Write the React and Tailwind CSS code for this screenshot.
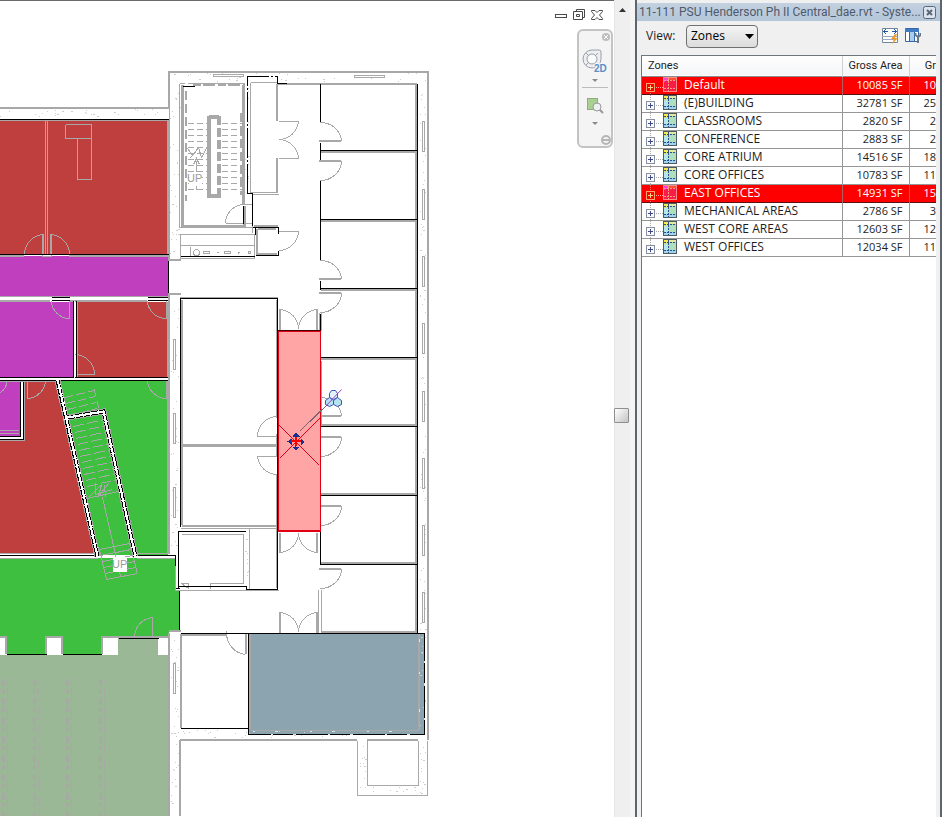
import React from 'react';

// `next` is the part of the following column that fits in the docked width
const zones = [
  { name: 'Default', gross: '10085 SF', next: '10', selected: true },
  { name: '(E)BUILDING', gross: '32781 SF', next: '25' },
  { name: 'CLASSROOMS', gross: '2820 SF', next: '2' },
  { name: 'CONFERENCE', gross: '2883 SF', next: '2' },
  { name: 'CORE ATRIUM', gross: '14516 SF', next: '18' },
  { name: 'CORE OFFICES', gross: '10783 SF', next: '11' },
  { name: 'EAST OFFICES', gross: '14931 SF', next: '15', selected: true },
  { name: 'MECHANICAL AREAS', gross: '2786 SF', next: '3' },
  { name: 'WEST CORE AREAS', gross: '12603 SF', next: '12' },
  { name: 'WEST OFFICES', gross: '12034 SF', next: '11' },
];

// window slots in the exterior walls: [x, y, vertical]
const slots = [
  [213, 74], [354, 75],
  [422, 121, 1], [422, 189, 1], [422, 256, 1], [422, 323, 1], [422, 391, 1], [422, 458, 1], [422, 525, 1], [422, 592, 1],
  [173, 339, 1], [173, 413, 1], [173, 487, 1], [173, 663, 1],
];

// office doors off the east corridor
const doorsUp = [141, 279, 416];
const doorsDown = [161, 293, 437, 506, 569];

// concrete hatch, one strip per wall: [x, y, w, h, dots]
const strips = [
  [0, 109, 168, 8, 26], [170, 74, 10, 180, 34], [182, 73, 236, 9, 30], [420, 80, 6, 650, 90],
  [171, 300, 8, 250, 40], [171, 640, 8, 170, 34], [182, 730, 175, 8, 28], [360, 742, 6, 44, 10],
  [360, 787, 64, 7, 16], [420, 742, 6, 44, 10], [244, 84, 5, 110, 14], [245, 532, 4, 54, 8],
];

function makeSpecks() {
  let seed = 7;
  const rnd = () => {
    seed = (seed * 16807) % 2147483647;
    return seed / 2147483647;
  };
  const out = [];
  strips.forEach(([x, y, w, h, n]) => {
    for (let i = 0; i < n; i++) {
      out.push([Math.floor(x + rnd() * w), Math.floor(y + rnd() * h), rnd() > 0.8 ? 2 : 1]);
    }
  });
  return out;
}

const specks = makeSpecks();
const range = (n) => Array.from({ length: n }, (_, i) => i);

// two pixel line, moved back onto the pixel grid
function Thick({ d }) {
  return <path d={d} strokeWidth="2" transform="translate(-.5 -.5)" />;
}

function Fills() {
  return (
    <g>
      <path fill="#bf3f3f" d="M0 120H168V254H0zM77 302H168V377H77zM0 440H23V380H56L97 554H0z" />
      <path fill="#bf3fbf" d="M0 256H168V296H0zM0 302H73V377H0zM0 381H20V436H0z" />
      <path fill="#3fbf3f" d="M58 381H168V555H98zM0 558H175V590H179V631H169V638H118V654H0z" />
      <path fill="#9ab896" d="M0 655H118V638H158V655H168V817H0z" />
      <path fill="#8ca3b0" d="M248 633H424V734H248z" />
      <path fill="#fff" d="M0 638H6V654H0zM46 638H62V654H46zM102 638H118V654H102zM158 638H169V654H158z" />
    </g>
  );
}

function WestWing() {
  return (
    <g fill="none">
      <g stroke="#a8a8a8">
        <Thick d="M-1 108H169V72M168 119V255M-1 256H24M69 256H168M-1 301H50M70 301H147M77 302V377M-1 381H57M168 302V554M-1 637H6V654M46 654V637H62V654M102 654V637H169M169 655V817" />
        <path d="M-1 296H169M-1 120H168M45 120V254M47 120V254M42 254V256H51V254M65 124H91V179H77V138M65 124V138H91M-1 430H18M-1 433H18M-1 440H24V381M-1 553H97M-1 558H97M136 553H168M136 558H175" />
        <path d="M43 254V234A20 20 0 0 0 24 254M50 254V234A20 20 0 0 1 69 254" />
        <Thick d="M43 234V254M51 234V254" />
        <path d="M69 300V318A18 18 0 0 1 51 300M166 300V318A19 18 0 0 1 147 300M73 354A20 20 0 0 1 94 374H75" />
        <path d="M27 377V398A19 19 0 0 0 45 379V376M166 379V398A19 19 0 0 1 147 379V376M0 392A14 14 0 0 0 6 378" />
        <path d="M134 638A20 20 0 0 1 152 617V638" />
      </g>
      <g stroke="#000">
        <path d="M-1 119H169M-1 254H169M168 256V296M51 297H69M51 300H69M147 297H168M147 300H168M73 300V377M76 300V377M-1 377H168M-1 380H168M20 381V436H-1M23 381V439H-1M-1 555H97M135 555H175M6 654H46M62 654H101M118 638H158M179 590V631" />
      </g>
      <g stroke="#fff">
        <Thick d="M-1 299H50M70 299H146M-1 438H21M-1 379H168" />
        <path d="M74 300V378M21 381V438M-1 556H97M135 556H174M51 298H69M147 298H168" />
      </g>
      {/* slanted stair walls */}
      <path stroke="#a8a8a8" strokeWidth="6" d="M57 380L97 556M67 417L103 411L135 556" />
      <path stroke="#fff" strokeWidth="4" d="M57 379L97 556M67 417L103 411L135 556" />
      <path stroke="#000" strokeWidth="4" strokeDasharray="7 1" d="M57 380L97 556M67 417L103 411L135 556" />
      <path stroke="#fff" strokeWidth="2" d="M57 379L97 556M67 417L103 411L135 556" />
      <g stroke="#a8a8a8">
        {range(4).map((i) => (
          <path key={i} strokeDasharray="9 3" d={`M${64 + i * 1.5} ${397 + i * 6}L${94 + i} ${390 + i * 6}`} />
        ))}
        <path d="M94 389L95 396M97 401L98 408" />
        {range(11).map((i) => (
          <path key={i} strokeDasharray="11 3" d={`M${73 + i * 1.35} ${426 + i * 6}L${104 + i * 1.35} ${419 + i * 6}`} />
        ))}
        <path d="M86 498L118 491M88 497L101 484L98 496L108 483M95 482V494L112 489M104 485L105 497M102 497L120 576" />
        {range(6).map((i) => (
          <path key={i} d={`M${99 + i * 1.4} ${549 + i * 6}L${129 + i * 1.6} ${543 + i * 6}`} />
        ))}
        <path d="M99 549L106 579M129 543L137 573" />
      </g>
      <rect x="112" y="556" width="14" height="15" fill="#fff" />
      {/* seating in the lower hall */}
      <g stroke="#a5aba3">
        {[3, 34, 67, 100].map((x) => (
          <g key={x}>
            <path strokeWidth="3" strokeDasharray="7 3 4 5" d={`M${x} 678V817`} />
            <path strokeDasharray="3 4 9 2" d={`M${x + 4} 680V817`} />
          </g>
        ))}
        <path stroke="#9fb29c" strokeDasharray="2 3" d="M17 680V817M50 678V817M84 680V817M115 678V817" />
      </g>
    </g>
  );
}

function StairCore() {
  return (
    <g fill="none" stroke="#a8a8a8">
      <path d="M179 83H184M179 83V227H252M187 83H243" />
      <path strokeWidth="3" d="M182 84V226H244V205M243 84V204" />
      <path strokeWidth="3" strokeDasharray="8 2 12 3" d="M192 84H244" />
      <path strokeDasharray="9 4" strokeWidth="2" d="M185 90V200M240 112V194" />
      <path strokeWidth="4" d="M208 116H218M208 115V197M208 195H220" />
      <path strokeWidth="4" strokeDasharray="9 3" d="M218 115V197" />
      {range(12).map((i) => (
        <path key={i} strokeDasharray="6 3" d={`M187 ${123 + i * 6}H206M221 ${123 + i * 6}H241`} />
      ))}
      <path d="M187 148L192 155L198 147L201 157L206 148M189 158L198 148M196 160V189M193 164L196 158L199 164" />
      <rect x="188" y="171" width="13" height="14" fill="#fff" stroke="none" />
      <path stroke="#000" d="M182 86H194" />
    </g>
  );
}

function EastWing() {
  return (
    <g fill="none">
      <g stroke="#a8a8a8">
        <Thick d="M169 109V72H428V740M277 84H417M169 255V260H181M169 633V817M180 740H357M180 740V817M367 740H418" />
        <path d="M169 72V260M357 740V795H427V740M367 740V785H418V740" />
        {/* shaft */}
        <path d="M250 82V192H275M250 82H277M252 194H278" />
        <Thick d="M277 84V121M277 158V193" />
        <path d="M278 121H298A20 20 0 0 1 279 139A20 20 0 0 1 298 158H278" />
        <path d="M225 223H250M225 223A19 19 0 0 1 243 204H252V194M244 223H252V232" />
        <path d="M278 231H298A20 20 0 0 1 279 250" />
        <Thick d="M254 226H278M257 229V254H277M258 229H276" />
        {/* counter */}
        <path d="M180 234H254V258H180zM180 245H254M190 246V256M193 252A3 3 0 1 0 199 252A3 3 0 1 0 193 252M203 251H209V253H203zM216 252H218M224 251H230V253H224zM237 252H239M238 251V253M248 251H250V253H248z" />
        {/* west rooms */}
        <Thick d="M169 554V294H181M180 298H278M277 300V418M277 434V456M277 474V588M182 526H276M182 300V525" />
        <path strokeWidth="3" d="M182 445H277" />
        <path d="M257 436H277M257 436A20 20 0 0 1 277 416M257 456H277M257 456A20 20 0 0 0 277 474" />
        <path d="M180 528H277M249 528V588M181 534H243V583H210V588M188 588V583H181zM175 555V590H278" />
        {/* double doors */}
        <path d="M280 309A20 20 0 0 1 298 328A20 20 0 0 1 317 309M280 552A20 20 0 0 0 298 533A20 20 0 0 0 317 552M280 612A20 20 0 0 1 298 631A20 20 0 0 1 317 612" />
        <Thick d="M280 309V330M317 309V330M280 533V553M317 533V553M280 612V633M317 612V633" />
        {/* east offices */}
        <Thick d="M321 152H416M321 221H416M321 290H416M321 359H416M321 425H416M321 494H416M321 563H416M321 632H416M416 84V633" />
        <path d="M321 360V426M318 589V633M321 589V633M319 312V330M321 312V330" />
        {/* south rooms */}
        <Thick d="M181 634V728M182 635H226M246 634V654M169 631H181M250 634V730M419 634V730" />
        <path d="M226 631A21 22 0 0 0 245 654M250 730H418" />
      </g>
      <g stroke="#000">
        <path strokeDasharray="30 2 2 2" d="M247 193V76H277M247 193H252" />
        <path d="M277 76V83H286M243 205V223M252 193V225M180 256H254M252 227H278V233M255 227V234M278 250V255H255" />
        <path d="M320 83V122M320 142V161M320 180V259M320 280V289M320 313V397M320 426V437M320 457V506M320 525V564M417 83V633" />
        <path d="M320 150H417M320 219H417M320 288H417M320 357H417M320 426H417M320 495H417M320 564H417" />
        <path d="M180 526V298H277V416M277 435V456M277 474V589H246M178 587V531H245M178 586H246V589" />
        <path d="M175 555V565M175 588H179M180 633H424V734H248V633M180 728H248" />
      </g>
      <g stroke="#dde4e8">
        <path strokeDasharray="3 30 2 35" d="M419 638V730" />
        <path strokeDasharray="2 20 3 32" d="M424 660V734M252 731H420M270 734H420" />
      </g>
      {doorsUp.map((y) => (
        <g key={y} fill="#fff" stroke="#a8a8a8">
          <path d={`M320 ${y - 19}A21 20 0 0 1 341 ${y}`} />
          <Thick d={`M319 ${y}H341`} />
        </g>
      ))}
      {doorsDown.map((y) => (
        <g key={y} fill="#fff" stroke="#a8a8a8">
          <path d={`M320 ${y + 19}A21 20 0 0 0 341 ${y}`} />
          <Thick d={`M319 ${y}H341`} />
        </g>
      ))}
      {slots.map(([x, y, vertical]) => (
        <rect key={`${x}-${y}`} x={x} y={y} width={vertical ? 2 : 30} height={vertical ? 30 : 2} fill="#fff" stroke="#a8a8a8" />
      ))}
    </g>
  );
}

function SelectedSpace() {
  return (
    <g fill="none">
      <path stroke="#400" d="M277 330H320M277 330V531" />
      <rect x="278" y="331" width="42" height="200" fill="#ffa5a5" stroke="#e00014" />
      <path stroke="#e00014" d="M279 425L319 465M319 418L279 458M278 530H320" />
      <path stroke="#7b6470" d="M299 431L331 400" />
      {/* move grip */}
      <g fill="#1c2f8f" stroke="#1c2f8f">
        <path d="M289 441H302M295 435V448" />
        <path stroke="none" d="M287 441L291 438V445zM304 441L300 438V445zM295 432L292 436H299zM295 450L292 446H299z" />
      </g>
      <g stroke="#f00">
        <Thick d="M291 441H301M296 437V446" />
        <path d="M292 438L299 445M299 438L292 445" />
      </g>
      {/* zone marker */}
      <g shapeRendering="auto" stroke="#3d55b8">
        <path fill="#dff3fa" d="M329 393L331 390H335L337 393V397L333 399L329 397z" />
        <path fill="#b5e2f0" d="M325 400L329 397L333 400V404L329 406L325 404z" />
        <path fill="#b5e2f0" d="M333 400L337 397L341 400V404L337 406L333 404z" />
        <path stroke="#a040c8" d="M325 406L341 389" />
      </g>
    </g>
  );
}

function FloorPlan() {
  return (
    <svg className="block w-full h-full" shapeRendering="crispEdges" aria-label="Floor plan">
      <Fills />
      <g fill="#cdcdcd">
        {specks.map(([x, y, s], i) => (
          <rect key={i} x={x} y={y} width={s} height="1" />
        ))}
      </g>
      <g transform="translate(.5 .5)">
        <WestWing />
        <StairCore />
        <EastWing />
        <SelectedSpace />
      </g>
      <g fill="#9b9b9b" fontFamily="Liberation Sans, sans-serif" fontSize="11">
        <text x="187" y="182">UP</text>
        <text x="112" y="568">UP</text>
      </g>
    </svg>
  );
}

function WindowButtons() {
  return (
    <div className="absolute top-1.5 right-2 flex gap-0.5">
      <button type="button" aria-label="Minimize" className="w-4 h-4">
        <svg width="16" height="16" fill="#fff" stroke="#4a4a4a"><rect x="1.500" y="7.500" width="11" height="3" /></svg>
      </button>
      <button type="button" aria-label="Restore" className="w-4 h-4">
        <svg width="16" height="16" fill="#fff" stroke="#4a4a4a">
          <path d="M4.500 2.500H12.500V10.500H4.500z" />
          <path d="M1.500 4.500H10.500V12.500H1.500z" />
          <path d="M4.500 7.500H7.500V9.500H4.500z" />
        </svg>
      </button>
      <button type="button" aria-label="Close" className="w-4 h-4">
        <svg width="16" height="16" fill="#fff" stroke="#4a4a4a">
          <path d="M1.500 3.500H5L7 5.500L9 3.500H12.500V4.500L9.500 8L12.500 11.500V12.500H9L7 10.500L5 12.500H1.500V11.500L4.500 8L1.500 4.500z" />
        </svg>
      </button>
    </div>
  );
}

function Caret() {
  return <svg width="6" height="4" fill="#8a8a8a"><path d="M0 0H6L3 3z" /></svg>;
}

function NavigationBar() {
  return (
    <div className="absolute top-7 right-px w-9 rounded-md border-2 border-[#c3c3c3] bg-[#f4f4f4] flex flex-col items-center">
      <button type="button" aria-label="Close bar" className="self-end h-3">
        <svg width="10" height="10"><circle cx="5" cy="5" r="4" fill="#bdbdbd" /><path d="M3 3L7 7M7 3L3 7" stroke="#fff" /></svg>
      </button>
      <button type="button" aria-label="Steering wheel" className="mt-1.5 h-[26px]">
        <svg width="28" height="26" fill="none" stroke="#9a9fa8">
          <path fill="#eceef2" d="M11 1H18Q20 1 20 3V10A9 9 0 1 1 11 1z" />
          <circle cx="11" cy="10" r="5" fill="#fafafa" />
          <path d="M5 4L8 7M17 4L14 7M5 16L8 13" />
          <text x="13" y="23" fill="#5c8fc7" stroke="#f4f4f4" strokeWidth="2" paintOrder="stroke" fontFamily="Liberation Sans, sans-serif" fontSize="10" fontWeight="700">2D</text>
        </svg>
      </button>
      <button type="button" aria-label="Wheel menu" className="h-3"><Caret /></button>
      <hr className="w-6.5 border-[#bcbcbc]" />
      <button type="button" aria-label="Zoom region" className="mt-1.5 h-6">
        <svg width="18" height="18" fill="none">
          <rect x="1.500" y="1.500" width="10" height="11" fill="#a9cf93" stroke="#8fae7d" />
          <circle cx="11" cy="10" r="4" fill="#eef1f4" stroke="#989898" />
          <path d="M14 13L17 16" stroke="#989898" strokeWidth="2" />
        </svg>
      </button>
      <button type="button" aria-label="Zoom menu" className="h-3"><Caret /></button>
      <button type="button" aria-label="Bar options" className="mt-1 self-end h-3">
        <svg width="10" height="10"><circle cx="5" cy="5" r="4" fill="#f4f4f4" stroke="#b5b5b5" strokeWidth="2" /><path d="M2 5H8" stroke="#b5b5b5" strokeWidth="2" /></svg>
      </button>
    </div>
  );
}

function ScrollTrack() {
  return (
    <div className="w-4 shrink-0 bg-[#efefef] border-l border-[#e6e6e6] flex flex-col">
      <button type="button" aria-label="Scroll up" className="h-5 flex items-center justify-center">
        <svg width="7" height="4" fill="#333"><path d="M0 4L3.500 0L7 4z" /></svg>
      </button>
      <div className="flex-1" />
      <button type="button" aria-label="Scroll position" className="-ml-px w-[15px] h-[15px] rounded-[1px] border border-[#8e8e8e] bg-linear-to-br from-white to-[#c4c4c4]" />
      <div className="flex-1" />
      <div className="h-1.5" />
    </div>
  );
}

function ZoneIcon({ selected }) {
  return (
    <svg width="15" height="16" viewBox="0 0 15 16" className="shrink-0" shapeRendering="crispEdges">
      <rect x="0" y="0" width="14" height="15" fill={selected ? '#fa1c48' : '#b0dfc0'} />
      <path d="M1 5H5V11H1z" fill={selected ? '#fa1c48' : '#b4e6ea'} />
      <path d="M1 11H13V14H1z" fill={selected ? '#fa1c48' : '#9fd4f0'} />
      <path d="M1 1H5V3L1 5z" fill={selected ? '#ff40d0' : '#f6ea50'} />
      <path d="M5 1H13V3H5z" fill={selected ? '#ff5030' : '#e4e8a0'} />
      <rect x="0.500" y="0.500" width="13" height="14" fill="none" stroke={selected ? '#ff8a8a' : '#4d5c60'} />
      <path d="M5.500 1V14M1 3.500H13M1 11.500H13" fill="none" strokeDasharray="2 1" stroke={selected ? '#ffa080' : '#2c4f8c'} />
    </svg>
  );
}

function ZoneRow({ zone, first, last }) {
  const red = zone.selected;
  return (
    <tr className={`h-[18px] border-b ${red ? 'bg-[#fe0000] text-white border-[#5a1010]' : 'text-[#1e1e1e] border-[#969696]'}`}>
      <td className={`p-0 border-r ${red ? 'border-[#b06060]' : 'border-[#969696]'}`}>
        <div className="flex items-center h-[17px] pl-1">
          <div className="relative w-[17px] h-full shrink-0">
            <span className={`absolute left-1 w-0 border-l border-dotted ${red ? 'border-[#e08080]' : 'border-[#a8a8a8]'} ${first ? 'top-2' : 'top-0'} ${last ? 'h-2' : 'bottom-0'}`} />
            <span className={`absolute left-2 right-0 top-[10px] border-t border-dotted ${red ? 'border-[#ff9a9a]' : 'border-[#a8a8a8]'}`} />
            <button type="button" aria-label={`Expand ${zone.name}`} className="absolute left-0 top-[6px] w-[9px] h-[9px]">
              <svg className="block" width="9" height="9" shapeRendering="crispEdges">
                <rect x="0.500" y="0.500" width="8" height="8" fill={red ? '#fe0000' : '#fafafa'} stroke={red ? '#ffa070' : '#8a8fa0'} />
                <path d="M2 4.500H7M4.500 2V7" stroke={red ? '#ffd080' : '#3c4a8c'} />
              </svg>
            </button>
          </div>
          <ZoneIcon selected={red} />
          <span className="pl-[6px] whitespace-nowrap">{zone.name}</span>
        </div>
      </td>
      <td className={`p-0 pr-1.5 text-right text-[11px] border-r ${red ? 'border-[#b06060]' : 'border-[#969696]'}`}>{zone.gross}</td>
      <td className="p-0 text-right text-[11px]">{zone.next}</td>
    </tr>
  );
}

function SystemBrowser() {
  return (
    <aside className="w-[305px] shrink-0 flex flex-col bg-[#f0f0f0] border-l-2 border-[#5d6670]">
      <header className="mt-[3px] h-[18px] flex items-center justify-between pl-0.5 pr-1 bg-linear-to-b from-[#c3d0e0] to-[#b4c6da] text-[#4e5a6a]">
        <h1 className="font-[Roboto,sans-serif] text-[12px] leading-4 whitespace-nowrap">11-111 PSU Henderson Ph II Central_dae.rvt - Syste...</h1>
        <button type="button" aria-label="Close panel" className="w-[13px] h-[13px]">
          <svg className="block" width="13" height="13" fill="none" stroke="#5a6675">
            <rect x="0.500" y="0.500" width="12" height="12" rx="2" fill="#dbe4ee" />
            <path d="M4 4L9 9M9 4L4 9" strokeWidth="2" />
          </svg>
        </button>
      </header>
      <div className="h-[34px] flex items-center pl-[9px] pr-2 pb-1 text-[12px]">
        <label htmlFor="view" className="w-10 text-[#1e1e1e]">View:</label>
        <div className="relative">
          <select id="view" defaultValue="Zones" className="block w-[72px] h-[23px] pl-1 appearance-none rounded-sm border border-[#707070] bg-linear-to-b from-[#f4f4f4] to-[#dcdcdc] text-black">
            <option>Zones</option>
            <option>Systems</option>
          </select>
          <svg className="absolute right-1 top-[9px] pointer-events-none" width="9" height="5"><path d="M0 0H9L4.500 5z" /></svg>
        </div>
        <div className="ml-auto mr-[11px] flex gap-[7px]">
          <button type="button" aria-label="Autofit all columns">
            <svg width="16" height="16" fill="none">
              <path d="M0.500 0.500H15.500V14.500H0.500z" fill="#fff" stroke="#7286a0" />
              <path d="M0 8.500H15M0 11.500H12" stroke="#9aa9bd" />
              <path d="M1 3.500H6M10 3.500H15M4 1L1.500 3.500L4 6M12 1L14.500 3.500L12 6" stroke="#2058a8" />
              <path d="M13 6L9 11H12L10 16L16 10H13L15 6z" fill="#f09a28" />
            </svg>
          </button>
          <button type="button" aria-label="Column settings">
            <svg width="16" height="16" fill="none">
              <path d="M0.500 0.500H13.500V13.500H0.500z" fill="#fff" stroke="#3568a8" />
              <path d="M0 1H14V4H0z" fill="#3f7cc4" />
              <path d="M5 4H9V13H5z" fill="#a8cdf0" />
              <path d="M4.500 4V13M9.500 4V13" stroke="#3568a8" />
              <path d="M13 15V9M10.500 5V7L13 9L15.500 7V5" stroke="#6c7684" strokeWidth="2" />
            </svg>
          </button>
        </div>
      </div>
      <div className="flex-1 mx-1 border-l border-t border-[#6e7680] bg-white overflow-hidden">
        <table className="w-full table-fixed border-collapse text-[12px] leading-4">
          <colgroup>
            <col className="w-[200px]" />
            <col className="w-[67px]" />
            <col />
          </colgroup>
          <thead>
            <tr className="h-5 border-b border-[#8c8c8c] bg-linear-to-b from-white to-[#f4f5f7] text-[#1e1e1e] font-[Roboto,sans-serif] text-[11px]">
              <th className="p-0 pl-1.5 text-left font-normal border-r border-[#d0d0d0]">Zones</th>
              <th className="p-0 pr-1.5 text-right font-normal whitespace-nowrap border-r border-[#d0d0d0]">Gross Area</th>
              <th className="p-0 text-right font-normal">Gr</th>
            </tr>
          </thead>
          <tbody>
            {zones.map((z, i) => (
              <ZoneRow key={z.name} zone={z} first={i === 0} last={i === zones.length - 1} />
            ))}
          </tbody>
        </table>
      </div>
    </aside>
  );
}

export default function App() {
  return (
    <div className="flex h-screen overflow-hidden bg-white font-['Open_Sans',sans-serif]">
      <main className="relative flex-1 min-w-0 border-t border-[#6a6a6a]">
        <div className="-mt-px h-full"><FloorPlan /></div>
        <WindowButtons />
        <NavigationBar />
      </main>
      <ScrollTrack />
      <div className="w-[5px] shrink-0 bg-[#f4f4f4]" />
      <SystemBrowser />
      <div className="w-0.5 shrink-0 bg-[#5d6670]" />
    </div>
  );
}
